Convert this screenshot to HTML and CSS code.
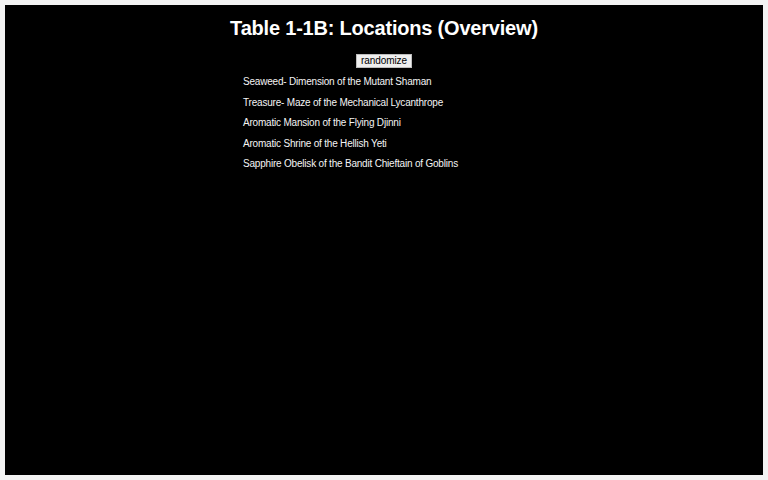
FILE: index.html
```html
<!DOCTYPE html>
<html>
<head>
<meta charset="utf-8">
<link rel="stylesheet" href="styles.css">
</head>
<body>
<div class="page">
  <h1 class="title">Table 1-1B: Locations (Overview)</h1>
  <div class="controls"><button class="btn">randomize</button></div>
  <ul class="list">
    <li>Seaweed- Dimension of the Mutant Shaman</li>
    <li>Treasure- Maze of the Mechanical Lycanthrope</li>
    <li>Aromatic Mansion of the Flying Djinni</li>
    <li>Aromatic Shrine of the Hellish Yeti</li>
    <li>Sapphire Obelisk of the Bandit Chieftain of Goblins</li>
  </ul>
</div>
</body>
</html>
```
FILE: styles.css
```css
html, body {
  margin: 0;
  padding: 0;
}
body {
  background: #f3f3f3;
  padding: 5px;
  font-family: "Liberation Sans", Arial, sans-serif;
}
.page {
  background: #000;
  color: #fff;
  height: 470px;
  box-sizing: border-box;
  padding-top: 11px;
}
.title {
  margin: 0;
  text-align: center;
  font-size: 20px;
  letter-spacing: -0.2px;
  font-weight: bold;
  line-height: 24px;
}
.controls {
  text-align: center;
  margin-top: 10px;
}
.btn {
  font-family: "Liberation Sans", Arial, sans-serif;
  font-size: 10px;
  letter-spacing: -0.1px;
  line-height: 12px;
  padding: 0 4px;
  margin: 0;
  background: #efefef;
  color: #000;
  border: 1px solid #bdbdbd;
  border-radius: 0;
}
.list {
  list-style: none;
  margin: 4px 0 0 238px;
  padding: 0;
  font-size: 10px;
  letter-spacing: -0.2px;
  line-height: 20.5px;
  color: #f4f4f4;
}
```
